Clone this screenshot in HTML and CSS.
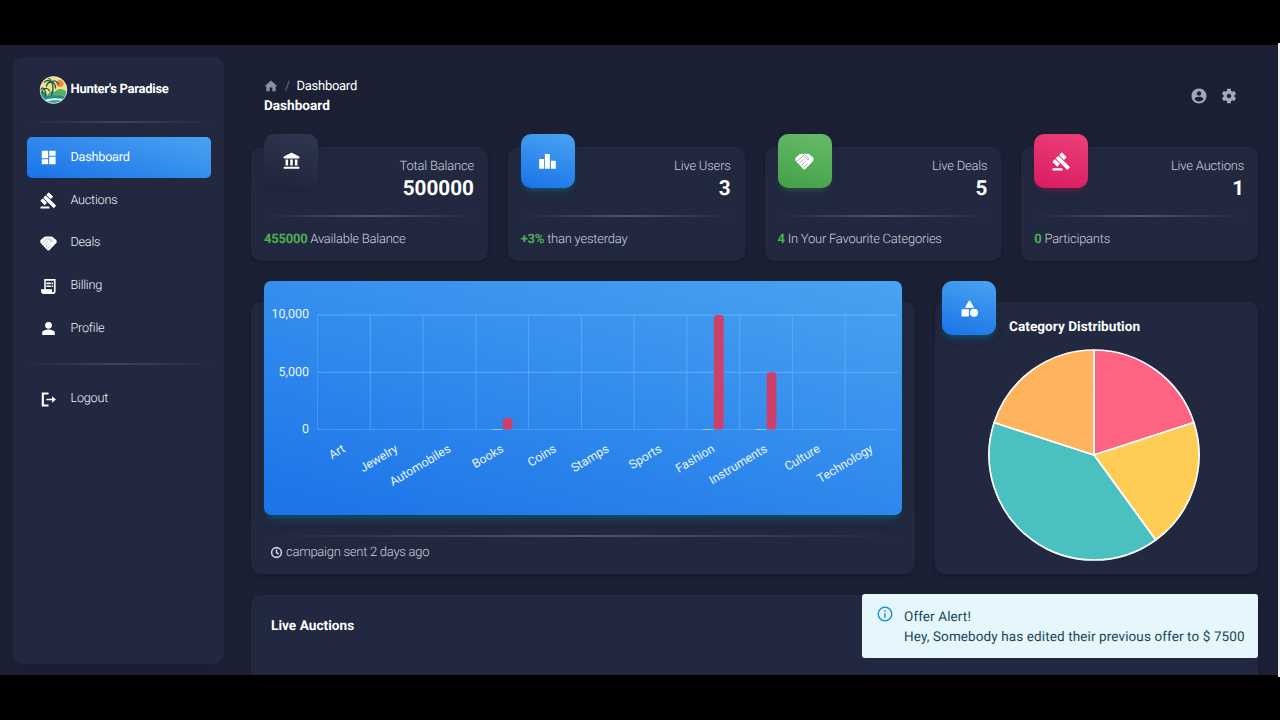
FILE: index.html
```html
<!DOCTYPE html>
<html lang="en">
<head>
	<meta charset="utf-8">
	<title>Hunter's Paradise</title>
	<link rel="stylesheet" href="styles.css">
</head>
<body>

	<!-- icons -->
	<svg class="icondefs">
		<symbol id="i-dashboard" viewBox="0 0 24 24"><path d="M2.500 13h9V2.500h-9V13zm0 8.500h9v-7h-9v7zm10.500 0h9V11h-9v10.500zm0-19v7h9v-7z"/></symbol>
		<symbol id="i-gavel" viewBox="0 0 24 24"><path stroke="currentColor" stroke-width="1.800" stroke-linejoin="round" d="M1.500 21.500h11v1h-11zM5.900 8.070l2.170-2.170 13.500 13.485-2.200 2.200zM12.317 1.700l4.950 4.950-2.100 2.100-4.950-4.950zM3.825 10.200l4.950 4.950-2.100 2.100-4.950-4.950z"/></symbol>
		<symbol id="i-handshake" viewBox="0 0 24 24"><path d="M1.500 6.500 5.500 3c1-.8 2.200-1 3.500-.8h6.500c1.100-.1 2 .2 2.800.9l4.200 3.600c1.500 1.400 1.500 3.400.1 4.900L13.500 21.300c-1 1-2.400 1-3.400 0L1.400 12c-1.500-1.600-1.500-4 .1-5.500z"/><path class="cut" d="M1.500 12.500 10.500 5l5 4.500c1 .8 2.500-.2 1.600-1.400L12.500 3.500M4.500 15.300l6.700-6.200M7.200 17.600l6-5.700M10 20l5.500-5.300"/></symbol>
		<symbol id="i-receipt" viewBox="0 0 24 24"><path d="M6 1.500h16V19c0 1.900-1.340 3.500-3 3.500H5c-1.900 0-3.500-1.500-3.500-3.500v-3H6V1.500zM19.700 19V4H8.200v12H17v3c0 .7.700 1.200 1.400 1.200s1.300-.5 1.300-1.200zM9 6.500h6.300v2.300H9zM16.300 6.500h2.200v2.300h-2.200zM9 10.500h6.300v2.300H9zM16.300 10.500h2.200v2.300h-2.200z"/></symbol>
		<symbol id="i-person" viewBox="0 0 24 24"><circle cx="12" cy="7.500" r="4.800"/><path d="M12 13.500c-3 0-9 1.500-9 4.700V20c0 .7.400 1 1 1h16c.6 0 1-.3 1-1v-1.800c0-3.200-6-4.700-9-4.700z"/></symbol>
		<symbol id="i-logout" viewBox="0 0 24 24"><path d="M2.500 2H12v2.800H5.500v14.400H12V22H2.500zM9 10.800h8V7.500l5.500 4.500-5.500 4.500v-3.300H9z"/></symbol>
		<symbol id="i-bank" viewBox="0 0 24 24"><path d="M4.500 9.500h3.200V17H4.500zM10.400 9.500h3.200V17h-3.200zM16.300 9.500h3.200V17h-3.200zM3 18.500h18c.6 0 1 .4 1 1.300s-.4 1.500-1 1.500H3c-.6 0-1-.6-1-1.500s.4-1.300 1-1.300zM11.100 1.200c.6-.3 1.200-.3 1.800 0L21.200 5.300c1.500.8 1.200 3-.4 3H3.200c-1.600 0-1.900-2.200-.4-3z"/></symbol>
		<symbol id="i-leaderboard" viewBox="0 0 24 24"><path d="M7.700 21.300H1.500V8.700h6.200v12.600zM15 2.500H8.700v18.800H15V2.500zM22.500 11h-6.200v10.300h6.200V11z"/></symbol>
		<symbol id="i-account" viewBox="0 0 24 24"><path d="M12 2C6.480 2 2 6.480 2 12s4.480 10 10 10 10-4.480 10-10S17.520 2 12 2zm0 3.500c1.660 0 3 1.340 3 3s-1.340 3-3 3-3-1.340-3-3 1.340-3 3-3zm0 13.700c-2.500 0-4.710-1.280-6-3.220.03-1.990 4-3.080 6-3.080 1.990 0 5.970 1.090 6 3.080-1.290 1.940-3.500 3.220-6 3.220z"/></symbol>
		<symbol id="i-settings" viewBox="0 0 24 24"><path d="M19.140 12.940c.04-.3.06-.61.06-.94 0-.32-.02-.64-.07-.94l2.030-1.580c.18-.14.23-.41.12-.61l-1.920-3.320c-.12-.22-.37-.29-.59-.22l-2.390.96c-.5-.38-1.030-.7-1.620-.94l-.36-2.540c-.04-.24-.24-.41-.48-.41h-3.840c-.24 0-.43.17-.47.41l-.36 2.540c-.59.24-1.130.57-1.620.94l-2.390-.96c-.22-.08-.47 0-.59.22L2.740 8.870c-.12.21-.08.47.12.61l2.030 1.580c-.05.3-.09.63-.09.94s.02.64.07.94l-2.030 1.580c-.18.14-.23.41-.12.61l1.920 3.320c.12.22.37.29.59.22l2.390-.96c.5.38 1.030.7 1.620.94l.36 2.540c.05.24.24.41.48.41h3.840c.24 0 .44-.17.47-.41l.36-2.540c.59-.24 1.130-.56 1.620-.94l2.390.96c.22.08.47 0 .59-.22l1.920-3.320c.12-.22.07-.47-.12-.61l-2.010-1.580zM12 15c-1.650 0-3-1.350-3-3s1.350-3 3-3 3 1.350 3 3-1.350 3-3 3z"/></symbol>
		<symbol id="i-home" viewBox="0 0 24 24"><path d="M9.800 21v-6.500h4.400V21H20v-8.500h3L12 2.500 1 12.500h3V21z"/></symbol>
		<symbol id="i-category" viewBox="0 0 24 24"><path stroke="currentColor" stroke-width="1.500" stroke-linejoin="round" d="M12 2.600l4.600 7.700H7.400zM2.700 13.800h7.800v7.400H2.700z"/><circle cx="17.700" cy="17.400" r="5.100"/></symbol>
		<symbol id="i-schedule" viewBox="0 0 24 24"><g fill="none" stroke="currentColor" stroke-width="2.900"><circle cx="12" cy="12" r="9"/><path d="M12 6.500V12l4 3"/></g></symbol>
		<symbol id="i-info" viewBox="0 0 24 24"><path d="M11 9h2V7h-2m1 13c-4.410 0-8-3.590-8-8s3.590-8 8-8 8 3.590 8 8-3.590 8-8 8m0-18A10 10 0 0 0 2 12a10 10 0 0 0 10 10 10 10 0 0 0 10-10A10 10 0 0 0 12 2m-1 15h2v-6h-2v6z"/></symbol>
	</svg>

	<div class="page">

		<!-- sidebar -->
		<nav class="sidebar">
			<div class="brand">
				<svg class="brandlogo" viewBox="0 0 28 28">
					<clipPath id="round"><circle cx="14" cy="14" r="13"/></clipPath>
					<circle cx="14" cy="14" r="13.700" fill="#eef5df"/>
					<g clip-path="url(#round)">
						<path fill="#f5e08a" d="M0 0h28v28H0z"/>
						<circle cx="20.500" cy="7.500" r="3.600" fill="#f0893a"/>
						<path fill="#52ad72" d="M8 19q4-6 7-3 5-6 13 0v7H8z"/>
						<path fill="#249083" d="M0 15q6 0 8 5 6-2 20 1v5H0z"/>
						<path fill="#e9f7ef" d="M4 24q9-3 20-1l-2 2q-8-2-16 1z"/>
						<path fill="#39a9b0" d="M5 26q9-3 18-1l-5 3h-8z"/>
						<g fill="none" stroke="#1c5b4d" stroke-width="1.300" stroke-linecap="round">
							<path d="M12 6q3 6 0 13M5 13q2 4 1 7"/>
							<path d="M12 6Q8 3 5 6M12 6q4-3 7 2M12 6q-4 0-5 4M12 6q4 1 4 6M12 6q-1-3-3-4M5 13q-3-2-4 1M5 13q3-2 5 2M5 13q-3 1-2 4"/>
						</g>
					</g>
				</svg>
				<span>Hunter's Paradise</span>
			</div>
			<hr class="line">
			<ul class="menu">
				<li class="active"><svg class="icon"><use href="#i-dashboard"/></svg>Dashboard</li>
				<li><svg class="icon"><use href="#i-gavel"/></svg>Auctions</li>
				<li><svg class="icon"><use href="#i-handshake"/></svg>Deals</li>
				<li><svg class="icon"><use href="#i-receipt"/></svg>Billing</li>
				<li><svg class="icon"><use href="#i-person"/></svg>Profile</li>
			</ul>
			<hr class="line">
			<ul class="menu">
				<li><svg class="icon"><use href="#i-logout"/></svg>Logout</li>
			</ul>
		</nav>

		<main class="content">
			<header class="topbar">
				<div>
					<div class="crumbs"><svg class="icon"><use href="#i-home"/></svg><i>/</i><span>Dashboard</span></div>
					<h1>Dashboard</h1>
				</div>
				<div class="tools">
					<svg class="icon"><use href="#i-account"/></svg>
					<svg class="icon"><use href="#i-settings"/></svg>
				</div>
			</header>

			<!-- statistics -->
			<section class="stats">
				<div class="card stat">
					<div class="stathead">
						<div class="tile dark"><svg class="icon"><use href="#i-bank"/></svg></div>
						<div class="figures"><p>Total Balance</p><h2>500000</h2></div>
					</div>
					<hr class="line">
					<p class="note"><b>455000</b> Available Balance</p>
				</div>
				<div class="card stat">
					<div class="stathead">
						<div class="tile blue"><svg class="icon"><use href="#i-leaderboard"/></svg></div>
						<div class="figures"><p>Live Users</p><h2>3</h2></div>
					</div>
					<hr class="line">
					<p class="note"><b>+3%</b> than yesterday</p>
				</div>
				<div class="card stat">
					<div class="stathead">
						<div class="tile green"><svg class="icon"><use href="#i-handshake"/></svg></div>
						<div class="figures"><p>Live Deals</p><h2>5</h2></div>
					</div>
					<hr class="line">
					<p class="note"><b>4</b> In Your Favourite Categories</p>
				</div>
				<div class="card stat">
					<div class="stathead">
						<div class="tile pink"><svg class="icon"><use href="#i-gavel"/></svg></div>
						<div class="figures"><p>Live Auctions</p><h2>1</h2></div>
					</div>
					<hr class="line">
					<p class="note"><b>0</b> Participants</p>
				</div>
			</section>

			<!-- charts -->
			<section class="charts">
				<div class="card barcard">
					<div class="barbox">
						<svg id="barchart" class="barchart" viewBox="0 0 638 234"></svg>
					</div>
					<hr class="line">
					<p class="sent"><svg class="icon"><use href="#i-schedule"/></svg>campaign sent 2 days ago</p>
				</div>
				<div class="card piecard">
					<div class="piehead">
						<div class="tile blue"><svg class="icon"><use href="#i-category"/></svg></div>
						<h3>Category Distribution</h3>
					</div>
					<svg id="piechart" class="piechart" viewBox="-106 -106 212 212"></svg>
				</div>
			</section>

			<section class="card auctions">
				<h3>Live Auctions</h3>
			</section>
		</main>

		<div class="alert">
			<svg class="icon"><use href="#i-info"/></svg>
			<div>
				<p>Offer Alert!</p>
				<p>Hey, Somebody has edited their previous offer to $ 7500</p>
			</div>
		</div>
	</div>
	<div class="scrollbar"></div>

	<script src="charts.js"></script>
</body>
</html>
```
FILE: styles.css
```css
* { box-sizing:border-box; }
body { margin:0; background:#000; font-family:Roboto, "Liberation Sans", sans-serif; font-size:13px; color:#fff; overflow:hidden; text-rendering:geometricPrecision; }
h1, h2, h3, p, ul { margin:0; padding:0; }
.icondefs { display:none; }
.icon { display:block; fill:currentColor; flex:none; }
.cut { fill:none; stroke:#4a5a68; stroke-width:.8; stroke-opacity:.75; }

.page { position:relative; display:flex; height:630px; margin:45px 0; padding:12px 22px 0 13px; overflow:hidden; background:#1b2035; }
.line { height:2px; margin:0; border:0; background:linear-gradient(to right, rgba(255,255,255,0), rgba(255,255,255,.22), rgba(255,255,255,0)); }

/* sidebar */
.sidebar { flex:none; width:211px; height:607px; padding:18px 13px 0 14px; border-radius:10px; background:#212840; box-shadow:0 12px 16px rgba(0,0,0,.06); }
.brand { display:flex; align-items:center; height:29px; padding-left:12px; font-weight:700; letter-spacing:-.27px; }
.brandlogo { width:29px; height:28px; margin-right:2.500px; }
.sidebar > .line { margin:17px 0 14px; opacity:.6; }
.menu { display:flex; flex-direction:column; gap:2.300px; list-style:none; }
.menu li { display:flex; align-items:center; height:40.500px; padding-left:13px; border-radius:5px; font-size:12.700px; line-height:16px; letter-spacing:-.25px; padding-top:1px; font-weight:300; color:#f1f3f8; }
.menu .icon { width:17px; height:17px; margin-right:13.500px; color:#fff; }
.menu .active { font-weight:400; color:#fff; background:linear-gradient(195deg, #49a3f1, #1a73e8); }
.sidebar > .menu + .line { margin:14px 0 14px; }

/* content */
.content { flex:1; min-width:0; margin-left:27px; }
.topbar { display:flex; justify-content:space-between; height:90px; padding:20px 20px 0 13px; }
.crumbs { display:flex; align-items:center; height:18px; letter-spacing:-.27px; }
.crumbs .icon { width:14px; height:14px; color:#8d909a; }
.crumbs i { width:18.500px; text-align:center; font-style:normal; color:#6c7280; }
.topbar h1 { margin-top:2px; font-size:13.600px; line-height:18px; font-weight:700; }
.tools { display:flex; gap:12px; padding-top:10px; color:#a5a8b3; }
.tools .icon { width:18px; height:18px; }

.card { border-radius:10px; background:#212840; box-shadow:0 2px 4px rgba(0,0,0,.22); }
.tile { display:flex; align-items:center; justify-content:center; flex:none; width:54px; height:54px; border-radius:10px; }
.tile .icon { width:19px; height:19px; }
.dark { background:linear-gradient(195deg, #2f3751, #1e2439); box-shadow:0 3px 12px rgba(0,0,0,.12); }
.blue { background:linear-gradient(195deg, #49a3f1, #1a73e8); box-shadow:0 3px 12px rgba(0,0,0,.14), 0 5px 8px -4px rgba(0,188,212,.5); }
.green { background:linear-gradient(195deg, #66bb6a, #43a047); box-shadow:0 3px 12px rgba(0,0,0,.14), 0 5px 8px -4px rgba(76,175,80,.5); }
.pink { background:linear-gradient(195deg, #ec407a, #d81b60); box-shadow:0 3px 12px rgba(0,0,0,.14), 0 5px 8px -4px rgba(233,30,99,.5); }

.stats { display:grid; grid-template-columns:repeat(4, 1fr); gap:20px; }
.stat { height:114px; padding:0 13px; }
.stathead { display:flex; justify-content:space-between; height:68px; }
.stathead .tile { margin-top:-13px; }
.figures { padding:10px .800px 0 0; text-align:right; }
.figures p { font-weight:300; line-height:20px; letter-spacing:-.2px; color:#cdd1dc; }
.figures h2 { font-size:20.700px; line-height:25px; font-weight:700; }
.note { margin-top:14px; line-height:18px; font-weight:300; letter-spacing:-.23px; color:#cdd1dc; }
.note b { font-weight:700; color:#4caf50; }

.charts { display:grid; grid-template-columns:664px 1fr; gap:20px; margin-top:41px; }
.charts .card { height:272px; padding:0 13px; }
.barbox { height:234px; margin-top:-21px; border-radius:7px; background:linear-gradient(195deg, #49a3f1, #1a73e8); box-shadow:0 4px 14px rgba(0,0,0,.14), 0 7px 9px -4px rgba(0,150,180,.5); }
.barchart { display:block; width:638px; height:234px; }
.barchart text { font-size:12.500px; fill:#e9f5ff; }
.barchart .tick { font-size:12.200px; }
.barcard > .line { margin-top:20px; }
.sent { display:flex; align-items:center; height:18px; margin-top:6px; padding-left:6px; font-weight:300; letter-spacing:-.26px; color:#cdd1dc; }
.sent .icon { width:13px; height:13px; margin-right:3px; }
.charts .piecard { padding-left:7px; }
.piehead { display:flex; gap:13px; height:47px; }
.piehead .tile { margin-top:-21px; }
.piehead h3 { padding-top:16px; }
h3 { font-size:13.600px; line-height:18px; letter-spacing:.04px; font-weight:700; }
.piechart { display:block; width:212px; height:212px; margin-left:45.500px; }

.auctions { height:120px; margin-top:21px; padding:22px 20px; }

/* toast in the corner */
.alert { position:absolute; right:22px; bottom:17px; display:flex; width:396px; height:64px; padding:11px 14px; border-radius:3px; background:#e5f6fd; color:#1b4655; font-size:13.500px; line-height:20px; letter-spacing:.11px; }
.alert .icon { width:18px; height:18px; margin-right:10px; color:#1a8fd1; }
.alert div { padding-top:2px; white-space:nowrap; }

.scrollbar { position:absolute; top:43px; right:0; width:2px; height:634px; background:#f1f1f1; }
```
FILE: charts.js
```js
const NS = "http://www.w3.org/2000/svg";

function add(parent, name, attrs, text) {
	const el = document.createElementNS(NS, name);
	for (const key in attrs) el.setAttribute(key, attrs[key]);
	if (text) el.textContent = text;
	parent.appendChild(el);
	return el;
}

// bar chart: value per category
const categories = [
	["Art", 0], ["Jewelry", 0], ["Automobiles", 0], ["Books", 1000], ["Coins", 0], ["Stamps", 0],
	["Sports", 0], ["Fashion", 10000], ["Instruments", 5000], ["Culture", 0], ["Technology", 0]
];
const bar = document.getElementById("barchart");
const left = 53.5, right = 634, top0 = 34, bottom = 148.5;
const step = (right - left) / categories.length;

["10,000", "5,000", "0"].forEach((label, i) => {
	const y = top0 + i * (bottom - top0) / 2;
	add(bar, "line", { x1: left, x2: right, y1: y, y2: y, stroke: "#8fd0ff", "stroke-opacity": i == 2 ? 0.3 : 0.45 });
	add(bar, "text", { x: 45, y: y + 3.3, "text-anchor": "end" }, label);
});

categories.forEach(([label, value], i) => {
	const x = left + i * step;
	add(bar, "line", { x1: x, x2: x, y1: top0, y2: bottom, stroke: "#8fd0ff", "stroke-opacity": i == 0 ? 0.25 : 0.35 });
	if (value) {
		const h = (bottom - top0) * value / 10000;
		add(bar, "line", { x1: x + 16, x2: x + 26, y1: bottom, y2: bottom, stroke: "#b9dcff", "stroke-opacity": 0.7 });
		add(bar, "rect", { x: x + 27, y: bottom - h, width: 9.7, height: h, rx: 3, fill: "#cf4068" });
	}
	add(bar, "text", { class: "tick", "text-anchor": "end", transform: `translate(${x + 28.5} 170) rotate(-31)` }, label);
});

// pie chart: share of deals
const slices = [[0.2, "#ff6384"], [0.2, "#ffcd56"], [0.4, "#4bc0c0"], [0.2, "#ffb35c"]];
const pie = document.getElementById("piechart");
let start = 0;
slices.forEach(([share, color]) => {
	const end = start + share;
	const point = t => `${105 * Math.sin(t * 2 * Math.PI)} ${-105 * Math.cos(t * 2 * Math.PI)}`;
	add(pie, "path", { d: `M0 0L${point(start)}A105 105 0 0 1 ${point(end)}Z`, fill: color, stroke: "#fff", "stroke-width": 1.7, "stroke-linejoin": "round" });
	start = end;
});
```
